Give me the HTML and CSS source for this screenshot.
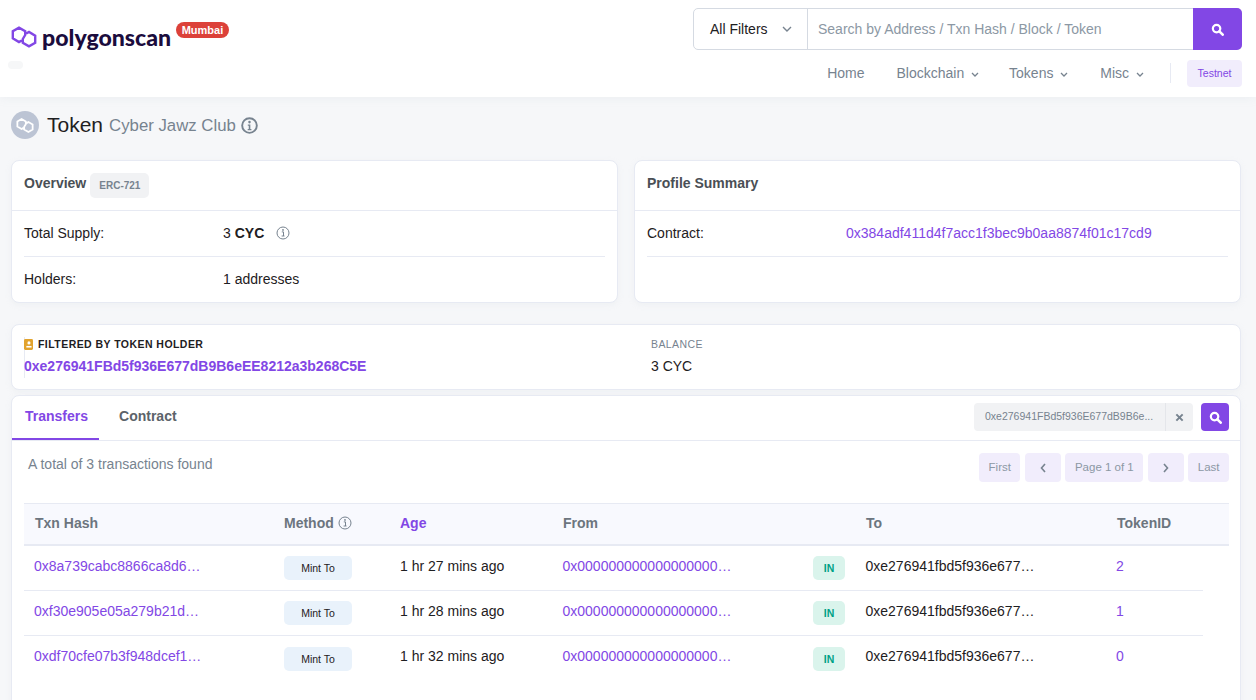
FILE: index.html
```html
<!DOCTYPE html>
<html lang="en">
<head>
<meta charset="utf-8">
<title>Token Cyber Jawz Club</title>
<link rel="stylesheet" href="styles.css">
</head>
<body>
<header class="topbar">
  <div class="brand">
    <div class="brand-row">
      <svg class="logo" viewBox="0 0 26 22"><path d="M10.700 14.500 8 16 1.800 12.400V5.200L8 1.600 14.200 5.200V9L11.800 13V16.800L18 20.400 24.200 16.800V9.600L18 6 15.300 7.500" fill="none" stroke="#8247e5" stroke-width="2.400"/></svg>
      <span class="wordmark">polygonscan</span>
      <span class="network">Mumbai</span>
    </div>
    <span class="brand-pill"></span>
  </div>
  <div class="top-right">
    <div class="searchbar">
      <div class="filter">All Filters
        <svg class="chev-lg" viewBox="0 0 10 6"><path d="M1 1l4 4 4-4" fill="none" stroke="#77838f" stroke-width="1.4"/></svg>
      </div>
      <div class="search-input">Search by Address / Txn Hash / Block / Token</div>
      <div class="search-btn">
        <svg class="mag" viewBox="0 0 14 14"><circle cx="6" cy="6" r="4" fill="none" stroke="#fff" stroke-width="2.400"/><path d="M9 9l3.600 3.600" stroke="#fff" stroke-width="2.800" stroke-linecap="round"/></svg>
      </div>
    </div>
    <nav class="nav">
      <span class="nav-item">Home</span>
      <span class="nav-item">Blockchain <svg class="chev" viewBox="0 0 8 5"><path d="M1 1l3 3 3-3" fill="none" stroke="#77838f" stroke-width="1.3"/></svg></span>
      <span class="nav-item">Tokens <svg class="chev" viewBox="0 0 8 5"><path d="M1 1l3 3 3-3" fill="none" stroke="#77838f" stroke-width="1.3"/></svg></span>
      <span class="nav-item">Misc <svg class="chev" viewBox="0 0 8 5"><path d="M1 1l3 3 3-3" fill="none" stroke="#77838f" stroke-width="1.3"/></svg></span>
      <span class="nav-sep"></span>
      <span class="testnet">Testnet</span>
    </nav>
  </div>
</header>

<main class="page">
  <div class="title-row">
    <span class="token-icon"><svg viewBox="0 0 26 22"><path d="M10.700 14.500 8 16 1.800 12.400V5.200L8 1.600 14.200 5.200V9L11.800 13V16.800L18 20.400 24.200 16.800V9.600L18 6 15.300 7.500" fill="none" stroke="#fff" stroke-width="2.600"/></svg></span>
    <h1 class="title">Token</h1>
    <span class="subtitle">Cyber Jawz Club</span>
    <svg class="info-strong" viewBox="0 0 16 16"><circle cx="8" cy="8" r="6.900" fill="none" stroke="#77838f" stroke-width="1.800"/><circle cx="8" cy="4.800" r="1.200" fill="#77838f"/><path d="M6.400 7h2.400v4.200h1v1.200H6.300v-1.200h1V8.200h-.9z" fill="#77838f"/></svg>
  </div>

  <section class="cards">
    <article class="card">
      <div class="card-head"><span class="card-title">Overview</span><span class="erc">ERC-721</span></div>
      <div class="card-body">
        <div class="kv kv-line"><span class="key">Total Supply:</span><span class="val">3 <b>CYC</b>
          <svg class="info-thin supply-info" viewBox="0 0 14 14"><circle cx="7" cy="7" r="6" fill="none" stroke="#77838f"/><path d="M5.800 5.900H7.500V10h1M5.600 10h2" fill="none" stroke="#77838f"/><circle cx="7" cy="3.900" r=".9" fill="#77838f"/></svg></span></div>
        <div class="kv kv-end"><span class="key">Holders:</span><span class="val">1 addresses</span></div>
      </div>
    </article>
    <article class="card">
      <div class="card-head"><span class="card-title">Profile Summary</span></div>
      <div class="card-body">
        <div class="kv kv-line"><span class="key">Contract:</span><span class="val link">0x384adf411d4f7acc1f3bec9b0aa8874f01c17cd9</span></div>
      </div>
    </article>
  </section>

  <section class="holder-card">
    <div class="holder-left">
      <div class="holder-label"><svg class="book" viewBox="0 0 10 12"><rect width="10" height="12" rx="1.500" fill="#e2a32d"/><circle cx="5.500" cy="4.200" r="1.700" fill="#fff"/><rect x="2.600" y="7.600" width="5.800" height="1.800" fill="#fff"/></svg> FILTERED BY TOKEN HOLDER</div>
      <div class="holder-addr">0xe276941FBd5f936E677dB9B6eEE8212a3b268C5E</div>
    </div>
    <div class="holder-right">
      <div class="balance-label">BALANCE</div>
      <div class="balance-val">3 CYC</div>
    </div>
  </section>

  <section class="tx-card">
    <div class="tabs">
      <span class="tab active">Transfers</span>
      <span class="tab">Contract</span>
      <div class="tab-search">
        <div class="filter-chip"><span class="chip-text">0xe276941FBd5f936E677dB9B6e...</span><span class="chip-x"><svg viewBox="0 0 10 10"><path d="M1.500 1.500l7 7M8.500 1.500l-7 7" stroke="#77838f" stroke-width="2.200"/></svg></span></div>
        <span class="chip-btn"><svg class="mag" viewBox="0 0 14 14"><circle cx="6" cy="6" r="4" fill="none" stroke="#fff" stroke-width="2.400"/><path d="M9 9l3.600 3.600" stroke="#fff" stroke-width="2.800" stroke-linecap="round"/></svg></span>
      </div>
    </div>
    <div class="tx-body">
      <div class="summary">
        <span class="total">A total of 3 transactions found</span>
        <div class="pager">
          <span class="pg">First</span>
          <span class="pg pg-arrow"><svg viewBox="0 0 6 10"><path d="M5 1 1.500 5 5 9" fill="none" stroke="#77838f" stroke-width="1.600"/></svg></span>
          <span class="pg">Page 1 of 1</span>
          <span class="pg pg-arrow"><svg viewBox="0 0 6 10"><path d="M1 1l3.500 4L1 9" fill="none" stroke="#77838f" stroke-width="1.600"/></svg></span>
          <span class="pg">Last</span>
        </div>
      </div>
      <div class="thead">
        <span class="th">Txn Hash</span>
        <span class="th">Method <svg class="info-thin" viewBox="0 0 14 14"><circle cx="7" cy="7" r="6" fill="none" stroke="#77838f"/><path d="M5.800 5.900H7.500V10h1M5.600 10h2" fill="none" stroke="#77838f"/><circle cx="7" cy="3.900" r=".9" fill="#77838f"/></svg></span>
        <span class="th th-age">Age</span>
        <span class="th">From</span>
        <span class="th"></span>
        <span class="th">To</span>
        <span class="th">TokenID</span>
      </div>
      <div class="tr">
        <span class="td link">0x8a739cabc8866ca8d6…</span>
        <span class="td td-chip"><span class="method">Mint To</span></span>
        <span class="td">1 hr 27 mins ago</span>
        <span class="td td-from link">0x000000000000000000…</span>
        <span class="td td-chip"><span class="dir">IN</span></span>
        <span class="td td-to">0xe276941fbd5f936e677…</span>
        <span class="td link">2</span>
      </div>
      <div class="tr">
        <span class="td link">0xf30e905e05a279b21d…</span>
        <span class="td td-chip"><span class="method">Mint To</span></span>
        <span class="td">1 hr 28 mins ago</span>
        <span class="td td-from link">0x000000000000000000…</span>
        <span class="td td-chip"><span class="dir">IN</span></span>
        <span class="td td-to">0xe276941fbd5f936e677…</span>
        <span class="td link">1</span>
      </div>
      <div class="tr tr-last">
        <span class="td link">0xdf70cfe07b3f948dcef1…</span>
        <span class="td td-chip"><span class="method">Mint To</span></span>
        <span class="td">1 hr 32 mins ago</span>
        <span class="td td-from link">0x000000000000000000…</span>
        <span class="td td-chip"><span class="dir">IN</span></span>
        <span class="td td-to">0xe276941fbd5f936e677…</span>
        <span class="td link">0</span>
      </div>
    </div>
  </section>
</main>
</body>
</html>
```

FILE: styles.css
```css
* { box-sizing: border-box; }
html, body { margin: 0; height: 700px; overflow: hidden; }
body { background: #f6f7f9; color: #1e2022; font: 14px/21px "Liberation Sans", Arial, sans-serif; }

.topbar { height: 97px; background: #fff; display: flex; justify-content: space-between; padding: 8px 14px 0 8px; box-shadow: 0 1px 10px rgba(151,164,175,.1); }
.brand { display: flex; flex-direction: column; align-items: flex-start; }
.brand-row { display: flex; align-items: flex-start; padding: 17px 0 0 3px; height: 53px; }
.logo { width: 26px; height: 22px; margin-top: 1px; flex: none; }
.wordmark { font: 900 23.100px/28px Lato, "Noto Sans", sans-serif; color: #1b0c3d; margin: -2px 0 0 5px; }
.network { background: #dc4139; color: #fff; font-size: 11px; font-weight: 700; line-height: 16px; padding: 0 5.500px; border-radius: 8px; margin: -3px 0 0 5px; }
.brand-pill { width: 15px; height: 8px; border-radius: 4px; background: #f6f7f8; }

.top-right { width: 549px; display: flex; flex-direction: column; }
.searchbar { height: 42px; display: flex; border: 1px solid #d5dae2; border-radius: 5px; }
.filter { width: 114px; padding: 0 0 0 16px; border-right: 1px solid #d5dae2; display: flex; align-items: center; }
.chev-lg { width: 10px; height: 6px; margin-left: 14px; }
.search-input { flex: 1; padding-left: 10px; color: #8c98a4; display: flex; align-items: center; }
.search-btn { width: 49px; margin: -1px; background: #8247e5; border-radius: 0 5px 5px 0; display: flex; align-items: center; justify-content: center; }
.mag { width: 13px; height: 13px; }

.nav { display: flex; align-items: center; justify-content: flex-end; height: 28px; margin-top: 9px; color: #77838f; }
.nav-item { margin-right: 31px; white-space: nowrap; }
.nav-item:first-child { margin-right: 32px; }
.nav-item:nth-child(2) { margin-right: 30px; }
.nav-item:nth-child(3) { margin-right: 32px; }
.nav-item:nth-child(4) { margin-right: 26px; }
.chev { width: 8px; height: 5px; margin-left: 3px; vertical-align: 1px; }
.nav-sep { width: 1px; height: 20px; background: #e7eaf3; margin-right: 16px; }
.testnet { width: 55px; height: 27px; background: #f1edfc; border-radius: 4px; color: #8247e5; font-size: 10.500px; line-height: 27px; text-align: center; }

.page { padding: 0 15px 0 11px; }
.title-row { height: 63px; padding-bottom: 7px; display: flex; align-items: center; }
.token-icon { width: 28px; height: 28px; border-radius: 50%; background: #bcc4d4; display: flex; align-items: center; justify-content: center; margin-right: 8px; }
.token-icon svg { width: 18px; height: 15px; }
.title { margin: 0; font-size: 21px; font-weight: 400; line-height: 28px; }
.subtitle { margin-left: 6px; font-size: 16.800px; color: #77838f; }
.info-strong { width: 17px; height: 17px; margin-left: 5px; }

.cards { display: grid; grid-template-columns: 1fr 1fr; gap: 16px; }
.card, .holder-card, .tx-card { background: #fff; border: 1px solid #e7eaf3; border-radius: 8px; box-shadow: 0 2px 6px rgba(189,197,209,.12); }
.card { height: 143px; }
.card-head { height: 50px; padding: 0 12px; display: flex; align-items: center; border-bottom: 1px solid #e7eaf3; }
.card-title { font-weight: 700; color: #4a4f55; margin-top: -4px; }
.erc { margin-left: 4px; background: #f1f2f4; color: #77838f; font-size: 10px; font-weight: 700; line-height: 25px; padding: 0 9px; border-radius: 5px; }
.card-body { padding: 0 12px; }
.kv { height: 46px; display: flex; align-items: center; }
.kv-line { border-bottom: 1px solid #e7eaf3; }
.kv-end { height: 44px; }
.key { width: 199px; color: #1e2022; }
.val { display: flex; align-items: center; white-space: pre; }
.val b { font-weight: 700; }
.supply-info { margin: -1px 0 0 12px; }
.info-thin { width: 14px; height: 14px; vertical-align: -2px; }
.link { color: #8247e5; }

.holder-card { height: 66px; margin-top: 21px; padding: 12px 12px 0; display: flex; }
.holder-left { width: 627px; box-shadow: inset 1px 0 #e7eaf3; margin-bottom: 11px; }
.holder-label { font-size: 10.500px; font-weight: 700; letter-spacing: .45px; line-height: 14px; color: #1e2022; display: flex; align-items: center; }
.book { width: 9px; height: 11px; margin-right: 5px; }
.holder-addr { color: #8247e5; font-weight: 700; line-height: 20px; margin-top: 5px; }
.balance-label { font-size: 10.500px; letter-spacing: .4px; line-height: 14px; color: #77838f; }
.balance-val { line-height: 20px; margin-top: 5px; }

.tx-card { height: 330px; margin-top: 5px; }
.tabs { height: 45px; display: flex; align-items: flex-end; border-bottom: 1px solid #e7eaf3; padding: 0 11px 0 0; }
.tab { height: 45px; line-height: 42px; padding: 0 12px; margin-right: 8px; font-weight: 700; color: #5c636a; }
.tab.active { padding-left: 13px; padding-right: 11px; color: #8247e5; border-bottom: 2px solid #8247e5; }
.tab-search { margin-left: auto; align-self: flex-start; margin-top: 7px; display: flex; gap: 8px; }
.filter-chip { width: 219px; height: 28px; background: #f1f2f4; border-radius: 4px; display: flex; }
.chip-text { flex: 1; font-size: 10.500px; line-height: 27px; color: #77838f; padding-left: 11px; }
.chip-x { width: 28px; border-left: 1px solid #e4e6ea; display: flex; align-items: center; justify-content: center; }
.chip-x svg { width: 9px; height: 9px; }
.chip-btn { width: 28px; height: 28px; background: #8247e5; border-radius: 4px; display: flex; align-items: center; justify-content: center; }

.tx-body { padding: 0 11px 0 12px; }
.summary { height: 62px; display: flex; justify-content: space-between; padding: 13px 0 0 4px; }
.total { color: #77838f; line-height: 21px; }
.pager { display: flex; gap: 4px; margin-top: -1px; }
.pg { height: 29px; padding: 0 9.500px; background: #f1edfc; border-radius: 4px; color: #8c98a4; font-size: 11.500px; line-height: 29px; }
.pg-arrow { width: 36px; margin-left: 1px; display: flex; align-items: center; justify-content: center; }
.pg-arrow svg { width: 6px; height: 10px; }

.thead, .tr { display: grid; grid-template-columns: 250px 116px 162px 251px 52px 251px 1fr; align-items: center; }
.thead { height: 43px; background: #f8f9fe; border-top: 1px solid #e7eaf3; border-bottom: 2px solid #e7eaf3; }
.th { padding: 0 0 2px 11px; font-weight: 700; color: #6c757e; }
.th:nth-child(2), .th:nth-child(3) { padding-left: 10px; }
.th-age { color: #8247e5; }
.tr { height: 45px; margin-right: 26px; border-bottom: 1px solid #e7eaf3; white-space: nowrap; }
.tr-last { border-bottom: 0; }
.td { padding: 0 0 4px 10px; }
.td-from { padding-left: 10.500px; }
.td-to { padding-left: 10.500px; }
.td-chip { padding-bottom: 0; }
.method { display: block; width: 68px; height: 24px; background: #e9f2fb; border-radius: 5px; color: #1e2022; font-size: 10.500px; line-height: 24px; text-align: center; }
.dir { display: block; width: 32px; height: 24px; background: #daf4ec; border-radius: 5px; color: #00a186; font-size: 10.500px; font-weight: 700; line-height: 24px; text-align: center; }
```
